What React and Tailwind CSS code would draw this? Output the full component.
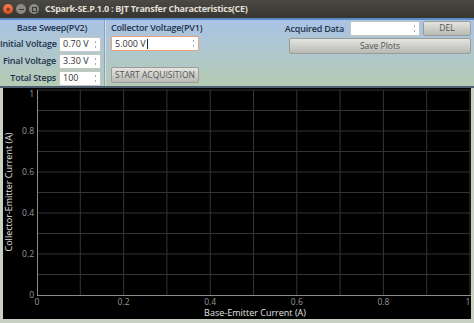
import React from 'react';

const FONT = { fontFamily: '"Open Sans", "DejaVu Sans", sans-serif' };

const PLOT_W = 468;
const PLOT_H = 231;
const X0 = 34;
const X1 = 467;
const Y0 = 207;
const Y1 = 2;

function SpinBox({ value, w = 'w-[42px]', focus = false }) {
    return (
        <div className={`${w} h-[15px] flex bg-white rounded-[2px] border ${focus ? 'border-[#e9a07c]' : 'border-[#c6c6c0]'}`}>
            <div className="flex-1 flex items-center pl-[3px] text-[9px] text-[#333] whitespace-nowrap">
                {value}
                {focus && <span className="w-px h-[10px] bg-[#222] ml-px" />}
            </div>
            <div className="w-[9px] flex flex-col items-center justify-center gap-[3px]">
                <span className="w-px h-[2px] bg-[#aaa]" />
                <span className="w-px h-[2px] bg-[#aaa]" />
            </div>
        </div>
    );
}

function Button({ children, className = '' }) {
    return (
        <div className={`flex items-center justify-center whitespace-nowrap rounded-[2px] border border-[#9c9c96] bg-gradient-to-b from-[#e4e4e0] to-[#b9b9b4] text-[8.5px] text-[#555] ${className}`}>
            {children}
        </div>
    );
}

function Plot() {
    const ticks = [0, 0.2, 0.4, 0.6, 0.8, 1];
    const grid = [0.1, 0.2, 0.3, 0.4, 0.5, 0.6, 0.7, 0.8, 0.9, 1];
    const px = v => X0 + v * (X1 - X0);
    const py = v => Y0 - v * (Y0 - Y1);
    return (
        <svg width={PLOT_W} height={PLOT_H} className="block bg-black" style={FONT}>
            {grid.map(g => (
                <g key={g}>
                    <line x1={px(g)} y1={Y1} x2={px(g)} y2={Y0} stroke="#343434" strokeWidth="1" />
                    <line x1={X0} y1={py(g)} x2={X1} y2={py(g)} stroke="#343434" strokeWidth="1" />
                </g>
            ))}
            <line x1={X0 + 0.5} y1={Y1} x2={X0 + 0.5} y2={Y0} stroke="#8c8c8c" />
            <line x1={X0} y1={Y0 + 0.5} x2={X1 + 2} y2={Y0 + 0.5} stroke="#8c8c8c" />
            {ticks.map(t => (
                <text key={'y' + t} x={X0 - 3} y={t === 1 ? py(t) + 7 : py(t) + 3} fontSize="8.5" fill="#9a9a9a" textAnchor="end">{t}</text>
            ))}
            {ticks.map(t => (
                <text key={'x' + t} x={t === 1 ? px(t) - 2 : px(t)} y={Y0 + 10} fontSize="8.5" fill="#9a9a9a" textAnchor="middle">{t}</text>
            ))}
            <text x="252" y="228" fontSize="9" fill="#e0e0e0" textAnchor="middle">Base-Emitter Current (A)</text>
            <text x="0" y="0" fontSize="9" fill="#e0e0e0" textAnchor="middle" transform="translate(9 104) rotate(-90)">Collector-Emitter Current (A)</text>
        </svg>
    );
}

const LABEL = 'text-[9px] font-semibold text-[#22324a] whitespace-nowrap tracking-[-0.2px]';

export default function App() {
    return (
        <div className="w-[474px] h-[323px] overflow-hidden flex flex-col bg-[#dde1d6]" style={FONT}>
            {/* Title bar */}
            <div className="h-[18px] flex items-center bg-gradient-to-b from-[#4a4944] to-[#36352f] px-[2px]">
                <div className="flex items-center gap-[3px] ml-[1px]">
                    <span className="w-[10px] h-[10px] rounded-full bg-gradient-to-b from-[#f47b4f] to-[#d9501f] flex items-center justify-center text-[7px] leading-none text-[#3a2a20] font-bold">×</span>
                    <span className="w-[10px] h-[10px] rounded-full bg-[#8a8984] flex items-center justify-center">
                        <span className="w-[5px] h-px bg-[#3c3b37]" />
                    </span>
                    <span className="w-[10px] h-[10px] rounded-full bg-[#8a8984] flex items-center justify-center">
                        <span className="w-[5px] h-[5px] border border-[#3c3b37]" />
                    </span>
                </div>
                <span className="ml-[6px] text-[9px] font-bold text-[#e2ded5] tracking-[-0.28px] whitespace-nowrap">CSpark-SE.P.1.0 : BJT Transfer Characteristics(CE)</span>
            </div>
            <div className="h-[2px] bg-[#5a8cc8]" />

            {/* Control panel */}
            <div className="h-[66px] flex bg-gradient-to-b from-[#aac3e6] to-[#b5cbb3]">
                <div className="w-[104px] flex flex-col">
                    <div className={`h-[16px] flex items-center justify-center ${LABEL}`}>Base Sweep(PV2)</div>
                    <div className="flex flex-col gap-[1px]">
                        {[['Initial Voltage', '0.70 V'], ['Final Voltage', '3.30 V'], ['Total Steps', '100']].map(([l, v]) => (
                            <div key={l} className="h-[16px] flex items-center">
                                <span className={`w-[59px] text-right pr-[3px] ${LABEL}`}>{l}</span>
                                <SpinBox value={v} />
                            </div>
                        ))}
                    </div>
                </div>
                <div className="w-[2px] bg-[#d4dde8] border-l border-[#8ea2bb]" />
                <div className="w-[100px] flex flex-col pl-[5px]">
                    <div className={`h-[16px] flex items-center ${LABEL}`}>Collector Voltage(PV1)</div>
                    <SpinBox value="5.000 V" w="w-[88px]" focus />
                    <Button className="mt-[16px] w-[88px] h-[16px]">START ACQUISITION</Button>
                </div>
                <div className="flex-1 flex flex-col items-end pr-[3px] pt-[1px] gap-[2px]">
                    <div className="flex items-center gap-[3px]">
                        <span className={`mr-[3px] ${LABEL}`}>Acquired Data</span>
                        <SpinBox value="" w="w-[70px]" />
                        <Button className="w-[48px] h-[15px]">DEL</Button>
                    </div>
                    <Button className="w-[182px] h-[16px]">Save Plots</Button>
                </div>
            </div>
            <div className="h-[2px] bg-[#4d5e70]" />

            {/* Plot */}
            <div className="flex-1 pl-[3px] pr-[3px] pb-[4px] bg-[#c9d2c2]">
                <Plot />
            </div>
        </div>
    );
}
